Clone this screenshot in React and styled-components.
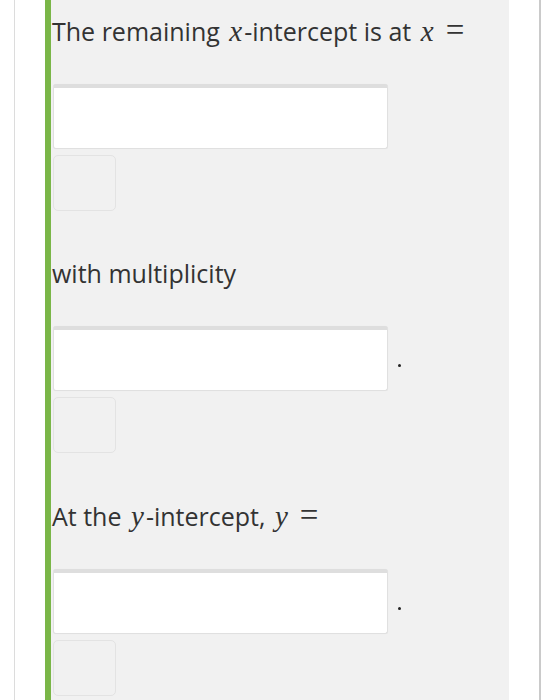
import React from "react";
import styled, { createGlobalStyle } from "styled-components";

const Global = createGlobalStyle`
  html, body {
    margin: 0;
    padding: 0;
    background: #ffffff;
  }
  body {
    font-family: "Open Sans", "Liberation Sans", sans-serif;
    color: #333333;
  }
`;

const Frame = styled.div`
  margin-left: 14px;
  width: 527px;
  box-sizing: border-box;
  border-left: 1px solid #dcdcdc;
  border-right: 2px solid #cacaca;
  padding: 0 30px;
  min-height: 700px;
`;

const Panel = styled.div`
  border-left: 6px solid #7ab648;
  background: #f1f1f1;
  padding: 12px 0 40px 1px;
  min-height: 700px;
`;

const Part = styled.section`
  display: flex;
  flex-direction: column;
  & + & {
    margin-top: ${(p) => p.$gap || 46}px;
  }
`;

const Label = styled.div`
  font-size: 25px;
  line-height: 36px;
  white-space: nowrap;
`;

const MathVar = styled.i`
  font-family: "Liberation Serif", "DejaVu Serif", serif;
  font-size: 29px;
  margin: 0 2px 0 3px;
`;

const MathOp = styled.span`
  font-family: "Liberation Serif", "DejaVu Serif", serif;
  font-size: 33px;
  margin-left: 10px;
`;

const AnswerRow = styled.div`
  display: flex;
  align-items: center;
  margin-top: 35px;
  padding-left: 1px;
`;

const AnswerBox = styled.div`
  width: 335px;
  height: 65px;
  box-sizing: border-box;
  background: #ffffff;
  border: 1px solid #e0e0e0;
  border-top: 4px solid #dedede;
  border-radius: 3px;
  box-shadow: 0 0 1px rgba(0, 0, 0, 0.06);
`;

const Period = styled.span`
  width: 3px;
  height: 3px;
  border-radius: 50%;
  background: #222;
  margin-left: 10px;
  margin-top: 14px;
`;

const HintBox = styled.div`
  width: 63px;
  height: 56px;
  box-sizing: border-box;
  margin: 6px 0 0 1px;
  border: 1px solid #e3e3e3;
  border-radius: 5px;
`;

const Question = ({ children, period, gap }) => (
  <Part $gap={gap}>
    <Label>{children}</Label>
    <AnswerRow>
      <AnswerBox />
      {period && <Period />}
    </AnswerRow>
    <HintBox />
  </Part>
);

export default function App() {
  return (
    <>
      <Global />
      <Frame>
        <Panel>
          <Question>
            The remaining <MathVar>x</MathVar>-intercept is at <MathVar>x</MathVar>
            <MathOp>=</MathOp>
          </Question>
          <Question period gap={48}>
            with multiplicity
          </Question>
          <Question period gap={44}>
            At the <MathVar>y</MathVar>-intercept, <MathVar>y</MathVar>
            <MathOp>=</MathOp>
          </Question>
        </Panel>
      </Frame>
    </>
  );
}
